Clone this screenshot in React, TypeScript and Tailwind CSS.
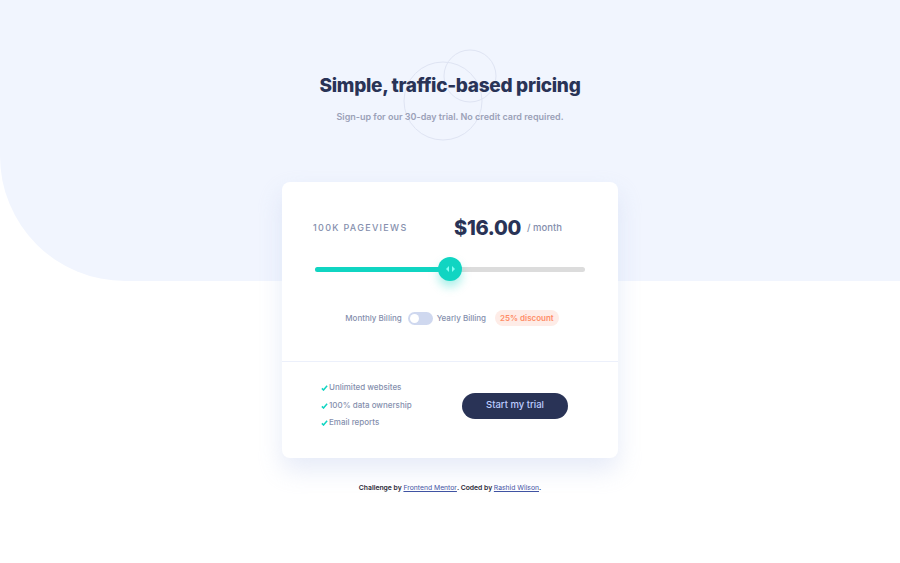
import React from "react";

function Check() {
  return (
    <svg width="7" height="6" viewBox="0 0 9 8" className="mr-[1px]">
      <path d="M1 4.5l2.2 2.2L8 1" fill="none" stroke="#10D5C2" strokeWidth="2" />
    </svg>
  );
}

export default function App() {
  return (
    <div className="w-full h-[563px] bg-white overflow-hidden" style={{ fontFamily: "Inter, 'Noto Sans', sans-serif" }}>
      <div className="relative h-[281px] bg-[#f1f5fe] rounded-bl-[125px] flex flex-col items-center pt-[72px]">
        <svg className="absolute left-[400px] top-[46px]" width="100" height="100" viewBox="0 0 100 100">
          <circle cx="43" cy="55" r="39" fill="none" stroke="#dfe4f3" strokeWidth="1" />
          <circle cx="70" cy="30" r="26" fill="none" stroke="#dfe4f3" strokeWidth="1" />
        </svg>
        <h1 className="relative text-[19px] leading-[28px] font-extrabold text-[#293356] tracking-[-0.3px]">
          Simple, traffic-based pricing
        </h1>
        <p className="relative mt-[10px] text-[9px] leading-[14px] font-semibold text-[#9ba1b8]">
          Sign-up for our 30-day trial. No credit card required.
        </p>
      </div>

      <div className="relative mx-auto -mt-[99px] w-[336px] h-[276px] bg-white rounded-[8px] shadow-[0_12px_24px_rgba(200,210,240,0.45)] flex flex-col">
        <div className="flex flex-col pt-[31px] pb-[35px] border-b border-[#ecf0fb]">
          <div className="flex items-center h-[30px] pl-[31px]">
            <div className="w-[141px] text-[9px] tracking-[1.3px] text-[#858fad] font-medium">100K PAGEVIEWS</div>
            <div className="text-[20px] font-extrabold text-[#293356] tracking-[-0.3px]">$16.00</div>
            <div className="ml-[6px] text-[9.5px] text-[#858fad] font-medium">/ month</div>
          </div>
          <div className="mt-[14px] pl-[33px] h-[24px] flex items-center">
            <div className="relative w-[270px] h-[5px] rounded-full bg-[#dcdcdc] flex items-center">
              <div className="h-[5px] w-[135px] rounded-full bg-[#10d5c2]" />
              <div className="absolute left-[123px] top-[-10px] w-[24px] h-[24px] rounded-full bg-[#10d5c2] shadow-[0_6px_10px_rgba(16,213,194,0.35)] flex items-center justify-center gap-[3px]">
                <svg width="3" height="6" viewBox="0 0 3 6"><path d="M3 0L0 3l3 3z" fill="#80fff3" /></svg>
                <svg width="3" height="6" viewBox="0 0 3 6"><path d="M0 0l3 3-3 3z" fill="#80fff3" /></svg>
              </div>
            </div>
          </div>
          <div className="mt-[29px] h-[16px] flex items-center justify-center pl-[4px] text-[8px] text-[#858fad] font-medium">
            <span>Monthly Billing</span>
            <div className="ml-[6px] w-[25px] h-[13px] rounded-full bg-[#cfd8ef] flex items-center px-[2px]">
              <div className="w-[9px] h-[9px] rounded-full bg-white" />
            </div>
            <span className="ml-[4px]">Yearly Billing</span>
            <span className="ml-[9px] px-[5px] h-[16px] rounded-full bg-[#feece7] text-[#ff8c66] font-semibold flex items-center">25% discount</span>
          </div>
        </div>
        <div className="flex-1 flex items-center pb-[9px] pl-[39px]">
          <div className="w-[140px] flex flex-col gap-[4px] text-[8px] leading-[13.5px] text-[#858fad] font-medium">
            <div className="flex items-center"><Check />Unlimited websites</div>
            <div className="flex items-center"><Check />100% data ownership</div>
            <div className="flex items-center"><Check />Email reports</div>
          </div>
          <button className="ml-[1px] w-[106px] h-[26px] rounded-full bg-[#293356] text-[#bdccff] text-[9.5px] font-medium">
            Start my trial
          </button>
        </div>
      </div>

      <div className="mt-[25px] text-center text-[6.8px] font-semibold text-[#1f2433]">
        Challenge by <a className="text-[#3e52a3] underline font-normal">Frontend Mentor</a>. Coded by <a className="text-[#3e52a3] underline font-normal">Rashid Wilson</a>.
      </div>
    </div>
  );
}
